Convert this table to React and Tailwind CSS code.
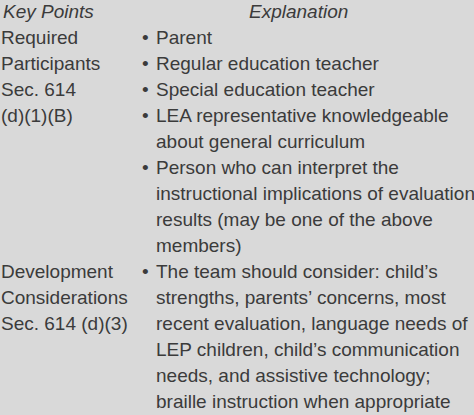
import React from 'react'

const rows = [
  {
    key: ['Required', 'Participants', 'Sec. 614', '(d)(1)(B)'],
    items: [
      ['Parent'],
      ['Regular education teacher'],
      ['Special education teacher'],
      ['LEA representative knowledgeable', 'about general curriculum'],
      ['Person who can interpret the', 'instructional implications of evaluation', 'results (may be one of the above', 'members)'],
    ],
  },
  {
    key: ['Development', 'Considerations', 'Sec. 614 (d)(3)'],
    items: [
      [
        'The team should consider: child’s',
        'strengths, parents’ concerns, most',
        'recent evaluation, language needs of',
        'LEP children, child’s communication',
        'needs, and assistive technology;',
        'braille instruction when appropriate',
      ],
    ],
  },
]

const App = () => {
  return (
    <div
      className="w-[474px] h-[415px] overflow-hidden bg-[#d9d9d9] text-[#3b3b3b] text-[19px] leading-[26px]"
      style={{ fontFamily: '"Liberation Sans", Arial, sans-serif' }}
    >
      <div className="grid grid-cols-[142px_1fr] -mt-[1px]">
        {/* header */}
        <div className="italic pl-[3px]">Key Points</div>
        <div className="italic pl-[107px]">Explanation</div>

        {rows.map((row, i) => (
          <React.Fragment key={i}>
            <div className="pl-[1px]">
              {row.key.map((line, j) => (
                <div key={j} className="whitespace-nowrap">{line}</div>
              ))}
            </div>
            <div>
              {row.items.map((item, j) => (
                <div key={j} className="flex">
                  <span className="w-[14px] shrink-0">•</span>
                  <div>
                    {item.map((line, k) => (
                      <div key={k} className="whitespace-nowrap">{line}</div>
                    ))}
                  </div>
                </div>
              ))}
            </div>
          </React.Fragment>
        ))}
      </div>
    </div>
  )
}

export default App
